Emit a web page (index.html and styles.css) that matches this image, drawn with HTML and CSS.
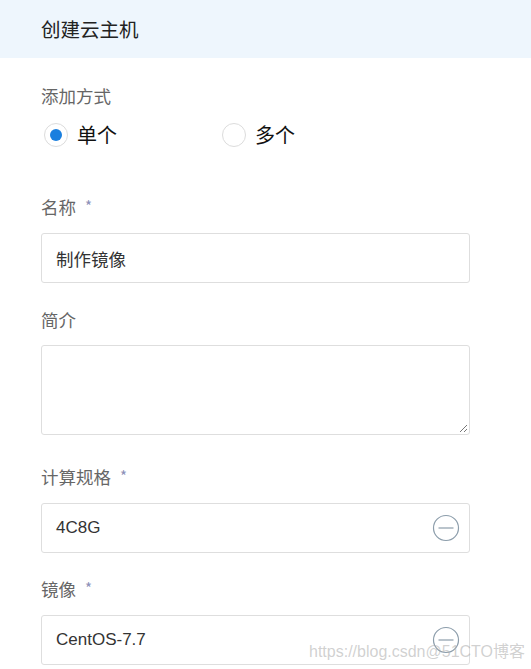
FILE: index.html
```html
<!DOCTYPE html>
<html lang="zh">
<head>
<meta charset="utf-8">
<link rel="stylesheet" href="styles.css">
</head>
<body>
<div class="header">创建云主机</div>
<div class="form">
  <div class="field">
    <div class="label">添加方式</div>
    <div class="radios">
      <label class="radio"><span class="dot on"></span><span>单个</span></label>
      <label class="radio"><span class="dot"></span><span>多个</span></label>
    </div>
  </div>
  <div class="field f-name">
    <div class="label">名称<span class="req">*</span></div>
    <div class="input">制作镜像</div>
  </div>
  <div class="field f-desc">
    <div class="label">简介</div>
    <div class="textarea">
      <svg class="grip" width="10" height="10" viewBox="0 0 10 10"><path d="M9 2L2 9M9 6L6 9" stroke="#777" stroke-width="1"/></svg>
    </div>
  </div>
  <div class="field f-spec">
    <div class="label">计算规格<span class="req">*</span></div>
    <div class="input select">4C8G
      <svg class="minus" width="28" height="28" viewBox="0 0 28 28"><circle cx="14" cy="14" r="12.5" fill="none" stroke="#8c9dab" stroke-width="1.2"/><path d="M6.5 14H21.5" stroke="#8c9dab" stroke-width="1.2"/></svg>
    </div>
  </div>
  <div class="field f-image">
    <div class="label">镜像<span class="req">*</span></div>
    <div class="input select">CentOS-7.7
      <svg class="minus" width="28" height="28" viewBox="0 0 28 28"><circle cx="14" cy="14" r="12.5" fill="none" stroke="#8c9dab" stroke-width="1.2"/><path d="M6.5 14H21.5" stroke="#8c9dab" stroke-width="1.2"/></svg>
    </div>
  </div>
</div>
<div class="watermark">https://blog.csdn@51CTO博客</div>
</body>
</html>
```
FILE: styles.css
```css
html, body {
  margin: 0;
  padding: 0;
  background: #fff;
  font-family: "Noto Sans CJK SC", "Liberation Sans", sans-serif;
  width: 531px;
  height: 669px;
  overflow: hidden;
  position: relative;
}
.header {
  height: 58px;
  background: #eef6fd;
  color: #222;
  font-size: 19.5px;
  line-height: 58px;
  padding-left: 41px;
  box-sizing: border-box;
}
.form {
  padding: 0 61px 0 41px;
  display: flex;
  flex-direction: column;
}
.field {
  display: flex;
  flex-direction: column;
}
.label {
  font-size: 17.5px;
  color: #666;
  line-height: 24px;
}
.req {
  color: #8c8fb8;
  font-size: 15px;
  margin-left: 9px;
  position: relative;
  top: -2px;
}
.field:first-child { margin-top: 26px; }
.radios {
  display: flex;
  margin-top: 14px;
}
.radio {
  display: flex;
  align-items: center;
  font-size: 20px;
  color: #111;
  line-height: 26px;
}
.radio:first-child { width: 178px; }
.dot {
  width: 22px;
  height: 22px;
  border: 1px solid #dcdcdc;
  border-radius: 50%;
  margin-left: 3px;
  margin-right: 9px;
  display: flex;
  align-items: center;
  justify-content: center;
  box-sizing: content-box;
}
.dot.on::after {
  content: "";
  width: 12px;
  height: 12px;
  border-radius: 50%;
  background: #1a7fdf;
}
.f-name { margin-top: 47px; }
.f-desc { margin-top: 25px; }
.f-spec { margin-top: 30px; }
.f-image { margin-top: 24px; }
.input, .textarea {
  margin-top: 13px;
  border: 1px solid #dedede;
  border-radius: 3px;
  box-sizing: border-box;
  width: 429px;
}
.input {
  height: 50px;
  font-size: 17.5px;
  color: #333;
  padding-left: 14px;
  display: flex;
  align-items: center;
  justify-content: space-between;
  padding-right: 9px;
}
.textarea {
  height: 90px;
  position: relative;
}
.grip {
  position: absolute;
  right: 1px;
  bottom: 1px;
}
.select { font-family: "Liberation Sans", "Noto Sans CJK SC", sans-serif; font-size: 17px; }
.minus { flex: none; }
.watermark {
  position: absolute;
  left: 309px;
  top: 638px;
  font-size: 16px;
  font-family: "Liberation Sans", "Noto Sans CJK SC", sans-serif;
  color: rgba(170,170,170,0.55);
  white-space: nowrap;
}
```
